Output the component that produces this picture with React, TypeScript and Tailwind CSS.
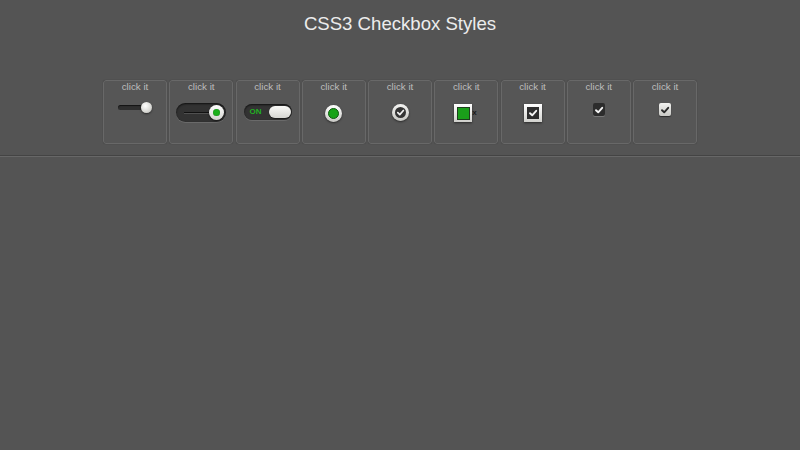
import React from "react";

function Check({ color, size = 10 }: { color: string; size?: number }) {
  return (
    <svg width={size} height={size} viewBox="0 0 10 10">
      <polyline points="2,5.2 4.2,7.3 8.2,2.8" fill="none" stroke={color} strokeWidth="1.9" strokeLinecap="round" strokeLinejoin="round" />
    </svg>
  );
}

function Box({ children, pt }: { children: React.ReactNode; pt: string }) {
  return (
    <div className="w-[64px] h-[64px] rounded-[3px] border border-[#686868] bg-[#565656] shadow-[0_0_1px_rgba(0,0,0,0.4)] flex flex-col items-center">
      <div className="text-[9.8px] leading-[10px] text-[#bdbdbd] mt-[1px]">click it</div>
      <div className={`flex justify-center ${pt}`}>{children}</div>
    </div>
  );
}

export default function App() {
  return (
    <div className="min-h-screen bg-[#545454] font-['Liberation_Sans',Arial,sans-serif]">
      <h1 className="pt-[14px] text-center text-[18.6px] leading-[19px] text-[#ececec] font-normal">
        CSS3 Checkbox Styles
      </h1>
      <div className="mt-[47px] pb-[11px] border-b border-[#444]">
        <div className="flex justify-center gap-[2.25px]">
          {/* 1 slider */}
          <Box pt="mt-[10px]">
            <div className="relative w-[34px] h-[11px]">
              <div className="absolute left-0 top-[3px] w-[31px] h-[5px] rounded-full bg-[#2f2f2f] shadow-[inset_0_1px_1px_rgba(0,0,0,0.6)]" />
              <div className="absolute right-0 top-0 w-[11px] h-[11px] rounded-full bg-[radial-gradient(circle_at_40%_35%,#ffffff,#d8d8d4_60%,#a9a9a4)] shadow-[0_1px_2px_rgba(0,0,0,0.5)]" />
            </div>
          </Box>
          {/* 2 dark toggle */}
          <Box pt="mt-[11px]">
            <div className="relative w-[50px] h-[19px] rounded-full bg-[#323232] shadow-[inset_0_1px_2px_rgba(0,0,0,0.7),0_1px_0_rgba(255,255,255,0.12)]">
              <div className="absolute left-[8px] top-[9px] w-[32px] h-px bg-[#111] shadow-[0_1px_0_rgba(255,255,255,0.15)]" />
              <div className="absolute left-[33px] top-[2px] w-[15px] h-[15px] rounded-full bg-[linear-gradient(#ffffff,#d4d4d0)] shadow-[0_1px_2px_rgba(0,0,0,0.6)] flex items-center justify-center">
                <div className="w-[7px] h-[7px] rounded-full bg-[#1bb01b] shadow-[inset_0_0_1px_rgba(0,0,0,0.5)]" />
              </div>
            </div>
          </Box>
          {/* 3 ON toggle */}
          <Box pt="mt-[12px]">
            <div className="relative w-[48px] h-[16px] rounded-full bg-[#333] shadow-[inset_0_1px_2px_rgba(0,0,0,0.7),0_1px_0_rgba(255,255,255,0.12)]">
              <span className="absolute left-[6px] top-[4px] text-[8px] leading-[8px] font-bold text-[#22b022]">ON</span>
              <div className="absolute left-[25px] top-[2px] w-[22px] h-[12px] rounded-full bg-[linear-gradient(#fafaf8,#d6d6d2)] shadow-[0_1px_1px_rgba(0,0,0,0.5)]" />
            </div>
          </Box>
          {/* 4 radio */}
          <Box pt="mt-[13px]">
            <div className="w-[17px] h-[17px] rounded-full bg-[linear-gradient(#ffffff,#c8c8c4)] shadow-[0_1px_2px_rgba(0,0,0,0.5)] flex items-center justify-center">
              <div className="w-[11px] h-[11px] rounded-full bg-[#17a317] border border-[#0d5a0d]" />
            </div>
          </Box>
          {/* 5 circle check */}
          <Box pt="mt-[12px]">
            <div className="w-[17px] h-[17px] rounded-full bg-[linear-gradient(#f4f4f2,#c6c6c2)] shadow-[0_1px_2px_rgba(0,0,0,0.5)] flex items-center justify-center">
              <div className="w-[11px] h-[11px] rounded-full bg-[#333] flex items-center justify-center">
                <Check color="#f2f2f2" size={9} />
              </div>
            </div>
          </Box>
          {/* 6 green square */}
          <Box pt="mt-[12px]">
            <div className="relative w-[24px] h-[18px] flex">
              <div className="w-[18px] h-[18px] bg-[linear-gradient(#ffffff,#cfcfcb)] shadow-[0_1px_2px_rgba(0,0,0,0.5)] flex items-center justify-center">
                <div className="w-[13px] h-[13px] bg-[#1a9f1a] border border-[#1d3d1d]" />
              </div>
              <span className="absolute left-[18px] top-[5px] text-[8px] leading-[8px] font-bold text-[#1a1a1a]">x</span>
            </div>
          </Box>
          {/* 7 dark square check */}
          <Box pt="mt-[12px]">
            <div className="w-[18px] h-[18px] bg-[linear-gradient(#ffffff,#d2d2ce)] shadow-[0_1px_2px_rgba(0,0,0,0.5)] flex items-center justify-center">
              <div className="w-[12px] h-[12px] bg-[#2e2e2e] flex items-center justify-center">
                <Check color="#f5f5f5" size={10} />
              </div>
            </div>
          </Box>
          {/* 8 small dark */}
          <Box pt="mt-[11px]">
            <div className="w-[12px] h-[13px] rounded-[2px] bg-[#2c2c2c] shadow-[0_1px_0_rgba(255,255,255,0.2)] flex items-center justify-center">
              <Check color="#f2f2f2" size={10} />
            </div>
          </Box>
          {/* 9 small light */}
          <Box pt="mt-[11px]">
            <div className="w-[12px] h-[13px] rounded-[2px] bg-[linear-gradient(#f2f2f0,#c8c8c4)] shadow-[0_1px_1px_rgba(0,0,0,0.5)] flex items-center justify-center">
              <Check color="#2a2a2a" size={10} />
            </div>
          </Box>
        </div>
      </div>
      <div className="h-px bg-[#676767]" />
    </div>
  );
}
